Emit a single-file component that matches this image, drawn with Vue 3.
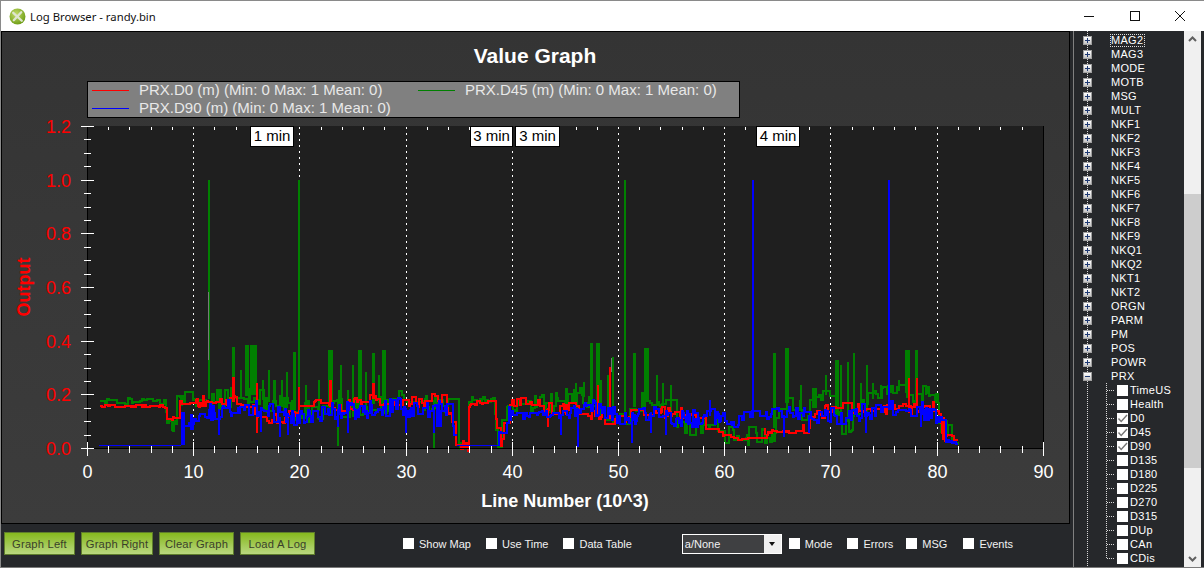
<template>
  <div class="window">
    <div class="titlebar">
      <svg class="app-icon" width="17" height="17" viewBox="0 0 16 16">
        <defs>
          <radialGradient id="logo" cx="40%" cy="35%" r="70%">
            <stop offset="0" stop-color="#c4dd6a" />
            <stop offset="1" stop-color="#6a9a12" />
          </radialGradient>
        </defs>
        <circle cx="8" cy="8" r="7.5" fill="url(#logo)" />
        <path d="M4 4.5 12 12M11.5 4 4.5 11.5" stroke="#dfe6cf" stroke-width="2.2" stroke-linecap="round" />
      </svg>
      <span class="title">Log Browser - randy.bin</span>
      <div class="win-btns">
        <svg width="12" height="12" viewBox="0 0 12 12"><path d="M1 6.5H11" stroke="#111" /></svg>
        <svg width="12" height="12" viewBox="0 0 12 12"><rect x="1.5" y="1.5" width="9" height="9" fill="none" stroke="#111" /></svg>
        <svg width="12" height="12" viewBox="0 0 12 12"><path d="M1 1 11 11M11 1 1 11" stroke="#111" /></svg>
      </div>
    </div>

    <div class="body">
      <div class="main">
        <div class="graph-panel">
          <svg class="chart" width="1067" height="491" viewBox="2 32 1067 491">
            <text x="535" y="63" class="chart-title" text-anchor="middle">Value Graph</text>

            <rect x="87.5" y="81.5" width="652" height="36" fill="#808080" stroke="#000" />
            <line x1="92" x2="129" y1="90.5" y2="90.5" stroke="#f00" />
            <text x="139" y="95" class="legend">PRX.D0 (m) (Min: 0 Max: 1 Mean: 0)</text>
            <line x1="418" x2="455" y1="90.5" y2="90.5" stroke="#008000" />
            <text x="465" y="95" class="legend">PRX.D45 (m) (Min: 0 Max: 1 Mean: 0)</text>
            <line x1="92" x2="129" y1="108.5" y2="108.5" stroke="#00f" />
            <text x="139" y="113" class="legend">PRX.D90 (m) (Min: 0 Max: 1 Mean: 0)</text>

            <rect x="87" y="126" width="956" height="322" fill="#1f1f1f" />

            <g shape-rendering="crispEdges">
              <line
                v-for="x in majorX"
                :key="'g' + x.v"
                :x1="x.px" :x2="x.px" y1="127" y2="442"
                stroke="#fff" stroke-dasharray="2 4"
              />
              <path :d="greenPath" fill="none" stroke="#008000" stroke-width="2" />
              <path d="M208.5 292V360M611.5 358V372M888.5 288V300" fill="none" stroke="#777" />
              <path :d="redPath" fill="none" stroke="#f00" stroke-width="2" />
              <path :d="bluePath" fill="none" stroke="#00f" stroke-width="2" />
              <path d="M99 445.5H181M457 445.5H498" fill="none" stroke="#00f" />

              <line x1="87.5" x2="87.5" y1="126" y2="448" stroke="#000" />
              <line x1="1043.5" x2="1043.5" y1="126" y2="448" stroke="#000" />
              <line x1="87" x2="1044" y1="448.5" y2="448.5" stroke="#000" />

              <line
                v-for="t in minorX"
                :key="'m' + t"
                :x1="t" :x2="t" y1="446" y2="453"
                stroke="#fff"
              />
              <line
                v-for="t in minorX"
                :key="'t' + t"
                :x1="t" :x2="t" y1="127" y2="130"
                stroke="#fff"
              />
              <line
                v-for="x in majorX"
                :key="'j' + x.v"
                :x1="x.px" :x2="x.px" y1="442" y2="456"
                stroke="#fff"
              />
              <line
                v-for="t in minorY"
                :key="'n' + t"
                x1="84" x2="91" :y1="t" :y2="t"
                stroke="#fff"
              />
              <line
                v-for="y in majorY"
                :key="'k' + y.label"
                x1="81" x2="94" :y1="y.py" :y2="y.py"
                stroke="#fff"
              />
            </g>

            <text
              v-for="y in majorY"
              :key="'l' + y.label"
              x="71"
              :y="y.py + 6"
              class="y-label"
              text-anchor="end"
            >{{ y.label }}</text>
            <text
              v-for="x in majorX"
              :key="'x' + x.v"
              :x="x.px"
              y="478"
              class="x-label"
              text-anchor="middle"
            >{{ x.v }}</text>

            <text x="565" y="507" class="x-title" text-anchor="middle">Line Number (10^3)</text>
            <text transform="translate(30 287) rotate(-90)" class="y-title" text-anchor="middle">Output</text>

            <g v-for="m in marks" :key="m.x">
              <rect :x="m.x + 0.5" y="126.5" :width="m.w" height="20" fill="#fff" stroke="#000" />
              <text :x="m.x + m.w / 2 + 0.5" y="141" class="mark" text-anchor="middle">{{ m.text }}</text>
            </g>
          </svg>
        </div>

        <div class="toolbar">
          <button v-for="b in buttons" :key="b.text" class="green-btn" :style="{ width: b.w + 'px' }" type="button">
            {{ b.text }}
          </button>
          <label class="check first"><span class="box"></span>Show Map</label>
          <label class="check use-time"><span class="box"></span>Use Time</label>
          <label class="check data-table"><span class="box"></span>Data Table</label>
          <div class="combo">
            <span class="combo-text">a/None</span>
            <span class="combo-arrow"><i></i></span>
          </div>
          <label class="check mode"><span class="box"></span>Mode</label>
          <label class="check errors"><span class="box"></span>Errors</label>
          <label class="check msg"><span class="box"></span>MSG</label>
          <label class="check events"><span class="box"></span>Events</label>
        </div>
      </div>

      <div class="tree">
        <div class="tree-list">
          <div v-for="(row, i) in parents" :key="row" class="tree-row">
            <span class="expander"><i class="h"></i><i v-if="row !== 'PRX'" class="v"></i></span>
            <span class="node" :class="{ focused: i === 0 }">{{ row }}</span>
          </div>
          <div v-for="(c, i) in children" :key="c.name" class="tree-row child" :class="{ last: i === children.length - 1 }">
            <span class="branch"></span>
            <span class="tree-box">
              <svg v-if="c.on" width="11" height="11" viewBox="0 0 11 11">
                <path d="M1.5 5.5 4.2 8.5 10 2" fill="none" stroke="#777" stroke-width="1.4" />
              </svg>
            </span>
            <span class="node">{{ c.name }}</span>
          </div>
        </div>
        <div class="scrollbar">
          <svg class="arrow" width="17" height="17" viewBox="0 0 17 17"><path d="M5 10 8.5 6.5 12 10" fill="none" stroke="#606060" stroke-width="2" /></svg>
          <div class="track"><div class="thumb"></div></div>
          <svg class="arrow" width="17" height="17" viewBox="0 0 17 17"><path d="M5 7 8.5 10.5 12 7" fill="none" stroke="#606060" stroke-width="2" /></svg>
        </div>
      </div>
    </div>
  </div>
</template>

<script setup>
const toX = (v) => 87 + v * 10.62;
const toY = (v) => 448 - v * 268.3;

const majorX = [0, 10, 20, 30, 40, 50, 60, 70, 80, 90].map((v) => ({ v, px: Math.round(toX(v)) + 0.5 }));
const minorX = [];
for (let v = 2; v < 90; v += 2) {
  if (v % 10) minorX.push(Math.round(toX(v)) + 0.5);
}
const majorY = ['0.0', '0.2', '0.4', '0.6', '0.8', '1.0', '1.2'].map((label) => ({
  label,
  py: Math.round(toY(Number(label))) + 0.5,
}));
const minorY = [];
for (let i = 1; i < 24; i++) {
  if (i % 4) minorY.push(Math.round(toY(i * 0.05)) + 0.5);
}

const marks = [
  { x: 250, w: 43, text: '1 min' },
  { x: 470, w: 42, text: '3 min' },
  { x: 515, w: 44, text: '3 min' },
  { x: 756, w: 43, text: '4 min' },
];

const buttons = [
  { text: 'Graph Left', w: 71 },
  { text: 'Graph Right', w: 72 },
  { text: 'Clear Graph', w: 75 },
  { text: 'Load A Log', w: 75 },
];

const parents = [
  'MAG2', 'MAG3', 'MODE', 'MOTB', 'MSG', 'MULT', 'NKF1', 'NKF2', 'NKF3', 'NKF4', 'NKF5', 'NKF6',
  'NKF7', 'NKF8', 'NKF9', 'NKQ1', 'NKQ2', 'NKT1', 'NKT2', 'ORGN', 'PARM', 'PM', 'POS', 'POWR', 'PRX',
];
const children = ['TimeUS', 'Health', 'D0', 'D45', 'D90', 'D135', 'D180', 'D225', 'D270', 'D315', 'DUp', 'CAn', 'CDis'].map(
  (name) => ({ name, on: ['D0', 'D45', 'D90'].includes(name) }),
);

// fake log data: keyframes in page pixels, seeded noise so the picture stays the same
const seeded = (seed) => () => {
  seed = (seed * 1664525 + 1013904223) % 4294967296;
  return seed / 4294967296;
};

const lerp = (keys, x) => {
  for (let i = 1; i < keys.length; i++) {
    if (x <= keys[i][0]) {
      const [x0, y0] = keys[i - 1];
      const [x1, y1] = keys[i];
      return y0 + ((y1 - y0) * (x - x0)) / (x1 - x0 || 1);
    }
  }
  return keys[keys.length - 1][1];
};

const trace = ({ keys, amp, hold, seed, spikes, skip = () => false }) => {
  const rand = seeded(seed);
  let y = keys[0][1];
  let d = `M99.5 ${y}`;
  for (let x = 100; x <= 957; x++) {
    if (rand() > hold) {
      y = Math.round(lerp(keys, x) + (rand() - 0.5) * 2 * amp(x));
    }
    d += skip(x) ? `M${x + 0.5} ${y}` : `H${x + 0.5}V${y}`;
  }
  spikes.forEach(([sx, sy, w = 1]) => {
    for (let i = 0; i < w; i++) {
      d += `M${sx + i + 0.5} ${Math.round(lerp(keys, sx))}V${sy}`;
    }
  });
  return d;
};

const flat = (x) => x < 165 || (x > 456 && x < 497) || x > 950;

const greenPath = trace({
  seed: 11,
  hold: 0.6,
  amp: (x) => (flat(x) ? 3 : 11),
  keys: [[99, 401], [163, 401], [167, 420], [170, 432], [174, 425], [176, 400], [181, 395], [186, 402], [200, 400], [230, 398], [250, 395], [275, 405], [300, 412], [330, 410], [350, 408], [380, 403], [400, 402], [420, 402], [445, 405], [450, 415], [453, 440], [456, 446], [467, 446], [468, 400], [493, 400], [496, 440], [500, 445], [503, 397], [507, 397], [515, 405], [540, 404], [560, 400], [580, 395], [600, 410], [620, 420], [640, 400], [660, 405], [680, 420], [690, 428], [700, 428], [710, 420], [722, 430], [726, 438], [760, 432], [772, 432], [780, 400], [800, 410], [812, 408], [825, 395], [840, 425], [850, 420], [870, 400], [900, 390], [925, 395], [936, 405], [942, 430], [957, 445]],
  spikes: [[208, 180], [232, 347, 2], [240, 370], [245, 345, 3], [250, 345, 6], [262, 380], [268, 370], [273, 380, 2], [281, 380], [286, 372], [293, 352, 2], [298, 180], [305, 385], [318, 380], [328, 350, 4], [337, 446], [338, 390], [340, 365], [347, 390], [352, 365], [358, 350, 3], [365, 372], [372, 353, 2], [378, 375], [382, 350, 3], [433, 448], [575, 383], [583, 382], [590, 343, 2], [596, 343, 3], [600, 380], [607, 375], [612, 357], [624, 180, 1], [633, 353, 2], [644, 348, 4], [656, 375], [662, 383], [670, 385], [773, 353, 2], [785, 348, 3], [800, 385], [812, 388, 4], [825, 375], [835, 360, 3], [840, 365], [847, 362], [853, 353], [860, 383], [866, 365], [872, 383], [880, 385], [890, 385], [898, 380], [905, 350, 4], [915, 350, 2], [925, 385]],
});

const redPath = trace({
  seed: 29,
  hold: 0.6,
  amp: (x) => (x < 165 ? 1.5 : x > 700 && x < 800 ? 1.5 : x > 468 && x < 494 ? 2 : 6),
  keys: [[99, 406], [163, 406], [167, 418], [170, 425], [175, 405], [185, 403], [210, 400], [240, 403], [262, 415], [275, 420], [290, 415], [310, 405], [340, 408], [375, 398], [395, 405], [410, 403], [440, 398], [450, 415], [453, 445], [467, 446], [468, 403], [494, 403], [497, 440], [500, 446], [505, 400], [520, 403], [550, 408], [580, 410], [600, 417], [615, 420], [640, 412], [680, 413], [700, 420], [705, 429], [715, 428], [725, 438], [735, 439], [760, 438], [770, 431], [800, 432], [812, 420], [830, 405], [860, 410], [880, 410], [905, 410], [920, 407], [935, 405], [940, 425], [945, 438], [957, 441]],
  spikes: [[232, 377, 2], [256, 383], [256, 433], [298, 387], [329, 380, 2], [372, 383, 2], [597, 385], [609, 367], [547, 427], [764, 428], [908, 378], [916, 378], [942, 417, 2], [942, 440, 2]],
});

const bluePath = trace({
  seed: 53,
  hold: 0.45,
  amp: (x) => (x < 179 || (x > 456 && x < 498) ? 0 : x > 945 ? 1 : x > 510 && x < 570 ? 5 : 9),
  skip: (x) => x < 181 || (x > 456 && x < 498),
  keys: [[99, 445], [178, 445], [181, 420], [190, 420], [194, 415], [215, 410], [240, 405], [262, 410], [280, 417], [300, 419], [330, 412], [360, 410], [395, 407], [420, 410], [445, 410], [450, 420], [453, 440], [457, 445], [497, 445], [501, 420], [510, 414], [540, 416], [570, 414], [590, 407], [620, 418], [650, 412], [680, 420], [710, 416], [725, 420], [760, 417], [790, 414], [830, 417], [855, 414], [880, 407], [910, 407], [930, 414], [940, 425], [945, 440], [957, 444]],
  spikes: [[181, 445, 3], [190, 430, 3], [218, 435], [260, 432], [279, 437], [287, 435], [337, 427], [347, 433], [405, 433], [433, 433], [436, 427, 5], [577, 447], [560, 435], [631, 443], [650, 433], [665, 435], [693, 428, 5], [709, 400], [752, 180, 1], [783, 437], [808, 433], [865, 433], [888, 180, 1], [920, 427]],
});
</script>

<style>
html,
body {
  margin: 0;
  background: #26282b;
}
</style>

<style scoped>
.window {
  width: 1204px;
  height: 568px;
  overflow: hidden;
  box-sizing: border-box;
  border-top: 1px solid #8a8a8a;
  border-left: 1px solid #8a8a8a;
  border-bottom: 1px solid #7a7a7a;
  background: #26282b;
  display: flex;
  flex-direction: column;
  font-family: "Liberation Sans", Arial, sans-serif;
}

.titlebar {
  height: 30px;
  flex: none;
  display: flex;
  align-items: center;
  background: #fff;
  padding-left: 8px;
}

.app-icon {
  margin-right: 4px;
}

.title {
  font-family: "Noto Sans", sans-serif;
  font-size: 11.3px;
  color: #111;
}

.win-btns {
  margin-left: auto;
  margin-right: 18px;
  display: flex;
  gap: 33.5px;
}

.body {
  flex: 1;
  display: flex;
  min-height: 0;
}

.main {
  width: 1072px;
  flex: none;
  display: flex;
  flex-direction: column;
}

.graph-panel {
  width: 1069px;
  height: 493px;
  box-sizing: border-box;
  border: 1px solid #000;
  background: linear-gradient(#343434, #3c3c3c);
}

.chart {
  display: block;
  font-family: "Liberation Sans", Arial, sans-serif;
}

.chart-title {
  font-size: 21px;
  font-weight: 700;
  fill: #fff;
}

.legend {
  font-size: 15px;
  fill: #e8e8e8;
}

.y-label {
  font-size: 18px;
  fill: #f00;
}

.x-label {
  font-size: 18px;
  fill: #fff;
}

.x-title {
  font-size: 18px;
  font-weight: 700;
  fill: #fff;
}

.y-title {
  font-size: 18px;
  font-weight: 700;
  fill: #f00;
}

.mark {
  font-size: 15px;
  fill: #000;
}

.toolbar {
  flex: 1;
  display: flex;
  align-items: center;
  padding-left: 3px;
  padding-bottom: 4px;
  font-size: 11px;
  color: #f2f2f2;
}

.green-btn {
  height: 23px;
  padding: 0;
  margin-right: 6px;
  border: 1px solid #5f7d2c;
  background: linear-gradient(#86b91e, #b9d77f);
  color: #3a3f2a;
  font-family: inherit;
  font-size: 11.2px;
  letter-spacing: 0.2px;
}

.check {
  display: flex;
  align-items: center;
  gap: 5px;
}

.box {
  width: 11px;
  height: 11px;
  background: #fff;
  flex: none;
}

.first {
  margin-left: 82px;
}

.use-time {
  margin-left: 15px;
}

.data-table {
  margin-left: 15px;
}

.combo {
  margin-left: 50px;
  width: 100px;
  height: 20px;
  box-sizing: border-box;
  border: 1px solid #fff;
  background: #3f4042;
  display: flex;
  align-items: center;
  justify-content: space-between;
}

.combo-text {
  padding-left: 2px;
}

.combo-arrow {
  width: 17px;
  height: 18px;
  background: #f0f0f0;
  display: flex;
  align-items: center;
  justify-content: center;
}

.combo-arrow i {
  width: 0;
  height: 0;
  border-left: 3px solid transparent;
  border-right: 3px solid transparent;
  border-top: 4px solid #111;
}

.mode {
  margin-left: 7px;
}

.errors {
  margin-left: 15px;
}

.msg {
  margin-left: 13px;
}

.events {
  margin-left: 16px;
}

.tree {
  flex: 1;
  display: flex;
  border-left: 1px solid #808080;
  min-width: 0;
}

.tree-list {
  width: 110px;
  flex: none;
  padding-top: 2px;
  overflow: hidden;
  background-image: linear-gradient(#d8d8d8 50%, transparent 50%);
  background-size: 1px 2px;
  background-repeat: repeat-y;
  background-position: 13px 0;
  color: #fff;
  font-size: 11px;
  letter-spacing: 0.3px;
}

.tree-row {
  height: 14px;
  display: flex;
  align-items: center;
  white-space: nowrap;
}

.expander {
  position: relative;
  box-sizing: border-box;
  width: 9px;
  height: 9px;
  margin-left: 9px;
  margin-right: 18px;
  flex: none;
  background: linear-gradient(#fff, #c4c4c4);
  border: 1px solid #a0a0a0;
}

.expander .h {
  position: absolute;
  left: 1px;
  top: 3px;
  width: 5px;
  height: 1px;
  background: #1f3a73;
}

.expander .v {
  position: absolute;
  left: 3px;
  top: 1px;
  width: 1px;
  height: 5px;
  background: #1f3a73;
}

.node {
  padding: 0 1px;
  line-height: 13px;
}

.focused {
  outline: 1px dotted #ddd;
  outline-offset: -1px;
  padding: 0 2px 0 1px;
}

.child {
  position: relative;
}

/* dotted trunk that joins the PRX children */
.child::before {
  content: "";
  position: absolute;
  left: 32px;
  top: 0;
  bottom: 0;
  width: 1px;
  background-image: linear-gradient(#d8d8d8 50%, transparent 50%);
  background-size: 1px 2px;
}

.child.last::before {
  bottom: 7px;
}

.branch {
  width: 8px;
  height: 1px;
  margin-left: 33px;
  margin-right: 2px;
  background-image: linear-gradient(90deg, #d8d8d8 50%, transparent 50%);
  background-size: 2px 1px;
  flex: none;
}

.tree-box {
  width: 11px;
  height: 11px;
  background: #fff;
  flex: none;
  margin-right: 1px;
  display: block;
}

.tree-box svg {
  display: block;
}

.scrollbar {
  width: 17px;
  background: #f0f0f0;
  display: flex;
  flex-direction: column;
}

.arrow {
  flex: none;
}

.track {
  flex: 1;
  padding-top: 146px;
}

.thumb {
  height: 274px;
  background: #cdcdcd;
}
</style>
